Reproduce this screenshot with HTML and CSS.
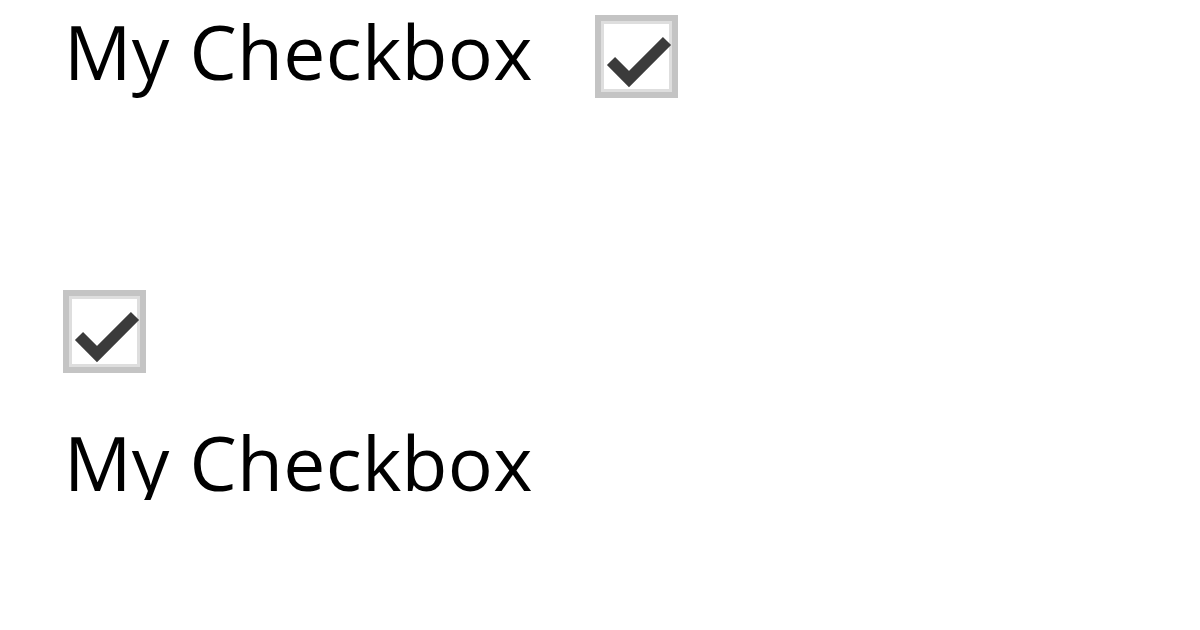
FILE: index.html
```html
<!DOCTYPE html>
<html>
<head>
<meta charset="utf-8">
<link rel="stylesheet" href="styles.css">
</head>
<body>
<div class="page">
  <div class="row">
    <span class="label label-top">My Checkbox</span>
    <span class="box box-inline">
      <svg viewBox="0 0 83 83" width="83" height="83"><polyline points="16,46 34,64 72,26" class="tick"/></svg>
    </span>
  </div>
  <div class="stack">
    <span class="box box-stack">
      <svg viewBox="0 0 83 83" width="83" height="83"><polyline points="16,46 34,64 72,26" class="tick"/></svg>
    </span>
    <span class="label">My Checkbox</span>
  </div>
</div>
</body>
</html>
```

FILE: styles.css
```css
html, body {
  margin: 0;
  padding: 0;
  background: #ffffff;
}
.page {
  padding: 15px 0 0 64px;
  font-family: "Open Sans", "Noto Sans", sans-serif;
  color: #000000;
}
.label {
  display: block;
  font-size: 75px;
  line-height: 75px;
  letter-spacing: 0.3px;
}
.label-top {
  margin-top: -1px;
}
.row {
  display: flex;
  align-items: flex-start;
}
.box {
  display: block;
  width: 83px;
  height: 83px;
  box-sizing: border-box;
  position: relative;
  background: #ffffff;
  border: 6px solid #c4c4c4;
  box-shadow: inset 0 0 0 3px #dedede;
}
.box svg {
  position: absolute;
  left: -6px;
  top: -6px;
}
.tick {
  fill: none;
  stroke: #3b3b3b;
  stroke-width: 11.5;
  stroke-linejoin: miter;
  stroke-linecap: butt;
}
.box-inline {
  margin-left: 62px;
}
.stack {
  display: flex;
  flex-direction: column;
  align-items: flex-start;
  margin-top: 192px;
}
.box-stack {
  margin-left: -1px;
  margin-bottom: 52px;
}
```
